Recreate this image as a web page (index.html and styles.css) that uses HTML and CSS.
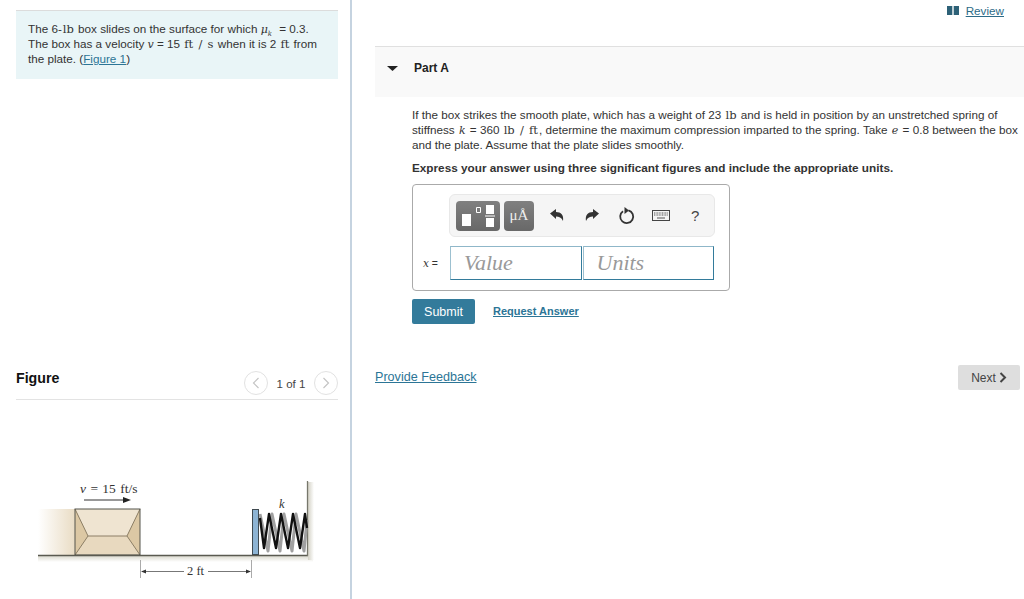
FILE: index.html
```html
<!DOCTYPE html>
<html lang="en">
<head>
<meta charset="utf-8">
<title>Part A</title>
<link rel="stylesheet" href="styles.css">
</head>
<body>
<div class="page">
  <aside class="left">
    <div class="intro">
      <p>The 6-<span class="m lb">lb</span> box slides on the surface for which <i class="mi mu">μ<sub>k</sub></i> = 0.3. The box has a velocity <i class="mi">v</i> = 15 <span class="m">ft</span> <span class="m">/</span> <span class="m">s</span> when it is 2 <span class="m">ft</span> from the plate. (<a href="#">Figure 1</a>)</p>
    </div>
    <div class="fig-head">
      <h2>Figure</h2>
      <div class="pager">
        <span class="circle"><svg width="8" height="12" viewBox="0 0 8 12"><path d="M6.500 1 1.500 6l5 5" fill="none" stroke="#c4c4c4" stroke-width="1.200"/></svg></span>
        <span class="count">1 of 1</span>
        <span class="circle"><svg width="8" height="12" viewBox="0 0 8 12"><path d="M1.500 1l5 5-5 5" fill="none" stroke="#c4c4c4" stroke-width="1.200"/></svg></span>
      </div>
    </div>
    <svg class="diagram" width="310" height="125" viewBox="0 0 310 125">
      <defs>
        <linearGradient id="fade" x1="0" x2="1" y1="0" y2="0"><stop offset="0" stop-color="#fff"/><stop offset="1" stop-color="#e9dcc4"/></linearGradient>
        <linearGradient id="wallsh" x1="0" x2="1" y1="0" y2="0"><stop offset="0" stop-color="#d4d2c6"/><stop offset="1" stop-color="#fff"/></linearGradient>
        <linearGradient id="floorsh" x1="0" x2="0" y1="0" y2="1"><stop offset="0" stop-color="#dcdbd0"/><stop offset="1" stop-color="#fff"/></linearGradient>
      </defs>
      <rect x="18" y="39" width="37" height="46" fill="url(#fade)"/>
      <rect x="18" y="86" width="275" height="6" fill="url(#floorsh)"/>
      <rect x="288" y="12" width="6" height="78" fill="url(#wallsh)"/>
      <rect x="55" y="39" width="65" height="46" fill="#e8d9bf"/>
      <path d="M55 39H120L107 66H68Z" fill="#efe4d1"/>
      <path d="M55 39 68 66 55 85ZM120 39 107 66 120 85Z" fill="#dcc8a4"/>
      <path d="M55 39 68 66H107L120 39M55 85 68 66M120 85 107 66" fill="none" stroke="#8c7f66"/>
      <rect x="55" y="39" width="65" height="46" fill="none" stroke="#55554c"/>
      <path d="M18 85.500H288" stroke="#5a5a50" stroke-width="1.300"/>
      <path d="M287.500 11V86" stroke="#77776c" stroke-width="1.300"/>
      <path d="M240 44 248 81 252 44 260 81 264 44 272 81 276 44 284 81 287 50" fill="none" stroke="#a0a0a0" stroke-width="3" stroke-linejoin="round"/>
      <path d="M240 48 244 78 249 44 256 78 261 44 268 78 273 44 280 78 285 44 287 58" fill="none" stroke="#111" stroke-width="2.400" stroke-linejoin="round"/>
      <rect x="232.500" y="39.500" width="6" height="45" fill="#8db4d4" stroke="#3f4a50"/>
      <text class="dg wide-txt" x="60" y="23"><tspan class="ital">v</tspan> = 15 ft/s</text>
      <path d="M64 30H104" stroke="#333"/>
      <path d="M111 30 103 27V33Z" fill="#222"/>
      <text class="dg ital" x="259" y="38">k</text>
      <path d="M120.500 90V108M231.500 90V108" stroke="#aaa"/>
      <path d="M122 101.500H164M188 101.500H230" stroke="#777"/>
      <path d="M121 101.500 126 99.500V103.500ZM231 101.500 226 99.500V103.500Z" fill="#333"/>
      <text class="dg" x="167" y="105">2 ft</text>
    </svg>
  </aside>
  <main class="right">
    <div class="review"><a href="#"><svg width="12" height="9" viewBox="0 0 12 9"><path d="M0 0H5.300V9H0ZM6.700 0H12V9H6.700Z" fill="#2d6177"/></svg><span class="rv">Review</span></a></div>
    <div class="part">
      <svg width="11" height="5" viewBox="0 0 11 5"><path d="M0 0H11L5.500 5Z" fill="#222"/></svg>
      <h3>Part A</h3>
    </div>
    <div class="content">
      <p class="q">If the box strikes the smooth plate, which has a weight of 23 <span class="m">lb</span> and is held in position by an unstretched spring of stiffness <i class="mi">k</i> = 360 <span class="m">lb</span> <span class="m">/</span> <span class="m">ft</span>, determine the maximum compression imparted to the spring. Take <i class="mi">e</i> = 0.8 between the box and the plate. Assume that the plate slides smoothly.</p>
      <p class="hint">Express your answer using three significant figures and include the appropriate units.</p>
      <div class="answer">
        <div class="toolbar">
          <span class="tbtn wide">
            <svg width="34" height="24" viewBox="0 0 34 24"><path d="M1 10H10V22H1ZM25 1H33V10H25ZM25 14H33V23H25Z" fill="#fff"/><path d="M15.500 3.500H19.500V8.500H15.500Z" fill="none" stroke="#fff"/><path d="M24 12H34" stroke="#fff"/></svg>
          </span>
          <span class="tbtn unit">μÅ</span>
          <span class="tool"><svg width="16" height="15" viewBox="0 0 16 15"><path d="M1 5.500 7 1V4C12 4 15 7 14 13 12.500 9.500 10 8.500 7 8.500V11Z" fill="#333"/></svg></span>
          <span class="tool"><svg width="16" height="15" viewBox="0 0 16 15"><path d="M15 5.500 9 1V4C4 4 1 7 2 13 3.500 9.500 6 8.500 9 8.500V11Z" fill="#333"/></svg></span>
          <span class="tool"><svg width="17" height="18" viewBox="0 0 17 18"><path d="M10.500 3.300A6.500 6.500 0 1 1 5 4.200" fill="none" stroke="#333" stroke-width="1.800"/><path d="M6.500 0 11 3.500 6.500 7Z" fill="#333"/></svg></span>
          <span class="tool"><svg width="18" height="11" viewBox="0 0 18 11"><rect x=".5" y=".5" width="17" height="10" fill="#f4f4f4" stroke="#444"/><path d="M2 3H16M2 5H16" stroke="#555" stroke-dasharray="1 .6"/><path d="M5 8H13" stroke="#555"/></svg></span>
          <span class="tool help">?</span>
        </div>
        <div class="row">
          <span class="label"><i class="mi">x</i> =</span>
          <div class="fields">
            <div class="field">Value</div>
            <div class="field">Units</div>
          </div>
        </div>
      </div>
      <div class="actions">
        <button class="submit">Submit</button>
        <a class="req" href="#">Request Answer</a>
      </div>
    </div>
    <div class="footer">
      <a href="#">Provide Feedback</a>
      <span class="next">Next<svg width="8" height="11" viewBox="0 0 8 11"><path d="M1.500 1 6 5.500 1.500 10" fill="none" stroke="#444" stroke-width="2"/></svg></span>
    </div>
  </main>
</div>
</body>
</html>
```
FILE: styles.css
```css
* { box-sizing: border-box; }
html, body { margin: 0; height: 100%; overflow: hidden; background: #fff; }
body { font-family: "Liberation Sans", Arial, sans-serif; font-size: 11.700px; color: #333; }
a { color: #2c7596; text-decoration: underline; }
p { margin: 0; }
.page { display: flex; height: 599px; }
.left { width: 352px; flex: none; padding: 10px 12px 0 16px; border-right: 2px solid #c5d3e0; }
.intro { height: 69px; padding: 11px 12px 0; background: #e9f5f7; border-top: 1px solid #dcdcdc; line-height: 15px; }
.intro p { margin-top: -1px; }
.m { display: inline-block; font-family: "DejaVu Serif", serif; font-size: 11.500px; line-height: 12px; }
.mi { font-family: "DejaVu Serif", serif; font-size: 11px; line-height: 12px; font-style: italic; }
.intro .m { padding: 0 1px; }
.mu { margin-right: 4px; }
.mi sub { font-size: 7px; line-height: 0; }
.fig-head { display: flex; justify-content: space-between; align-items: flex-start; height: 32px; margin-top: 289px; border-bottom: 1px solid #e3e3e3; }
.fig-head h2 { margin: 1px 0 0; font-size: 14.200px; line-height: 18px; color: #111; }
.pager { display: flex; align-items: center; height: 24px; margin-top: 3px; }
.circle { display: flex; align-items: center; justify-content: center; width: 24px; height: 24px; border: 1px solid #e2e2e2; border-radius: 50%; }
.count { width: 46px; padding-top: 2px; text-align: center; font-size: 11.500px; color: #444; }
.diagram { display: block; margin: 70px 0 0 4px; }
.dg { font-family: "Liberation Serif", serif; font-size: 12.500px; fill: #333; }
.wide-txt { font-size: 13.500px; word-spacing: 1px; }
.ital { font-style: italic; }
.right { flex: 1; min-width: 0; }
.review { display: flex; justify-content: flex-end; height: 46px; padding: 4px 20px 0 0; font-size: 11.700px; line-height: 13px; }
.review a { display: flex; align-items: center; height: 13px; color: #2d6b88; text-decoration: none; }
.rv { margin-left: 4px; padding-left: 3px; text-decoration: underline; }
.part { display: flex; align-items: flex-start; height: 51px; margin-left: 23px; padding: 16px 0 0 12px; background: #f9f9f9; border-top: 1px solid #e0e0e0; }
.part svg { margin-top: 3px; }
.part h3 { margin: -2px 0 0 16px; font-size: 12px; line-height: 15px; color: #222; }
.content { padding: 10px 0 0 60px; }
.q { padding-right: 2px; font-size: 11.700px; line-height: 15px; color: #333; }
.q .m { padding: 0 1px; font-size: 11.500px; }
.q .mi { margin: 0 1px; }
.hint { margin-top: 8px; font-size: 11.750px; line-height: 15px; font-weight: bold; color: #333; }
.answer { width: 318px; height: 107px; margin-top: 9px; padding: 9px 14px 0 36px; border: 1px solid #aaa; border-radius: 4px; }
.toolbar { display: flex; align-items: center; height: 43px; width: 266px; padding-left: 6px; background: #f5f5f5; border: 1px solid #e8e8e8; border-radius: 6px; }
.tbtn { display: flex; align-items: center; justify-content: center; height: 30px; background: linear-gradient(#808080, #686868); border-radius: 4px; color: #eee; }
.wide { width: 44px; }
.unit { width: 30px; margin-left: 4px; margin-right: 6px; font-family: "Liberation Serif", serif; font-size: 15px; }
.tool { display: flex; align-items: center; justify-content: center; width: 34.500px; }
.help { font-size: 15px; color: #444; }
.row { display: flex; align-items: center; margin: 9px 0 0 -36px; }
.label { width: 37px; flex: none; padding-left: 10px; font-size: 10.500px; color: #333; }
.label .mi { font-size: 10.500px; }
.fields { display: flex; gap: 1px; flex: none; }
.field { width: 131.500px; height: 34px; padding-left: 13px; font-family: "Liberation Serif", serif; font-style: italic; font-size: 22px; line-height: 32px; color: #999; border: 1px solid #337b9b; border-left-color: #9cc0d0; border-top-color: #8fb7c9; }
.actions { display: flex; align-items: center; margin-top: 8px; }
.submit { width: 63px; height: 25px; padding: 0; background: #337b9b; color: #fff; border: 0; border-radius: 2px; font-family: inherit; font-size: 12.500px; }
.req { margin-left: 18px; font-size: 11px; font-weight: bold; margin-top: -2px; }
.footer { display: flex; justify-content: space-between; align-items: flex-start; margin: 41px 4px 0 23px; }
.footer a { font-size: 12.600px; line-height: 15px; margin-top: 5px; }
.next { display: flex; align-items: center; gap: 3px; justify-content: center; width: 62px; height: 25px; background: #dedede; border-radius: 2px; font-size: 12px; color: #444; }
```
